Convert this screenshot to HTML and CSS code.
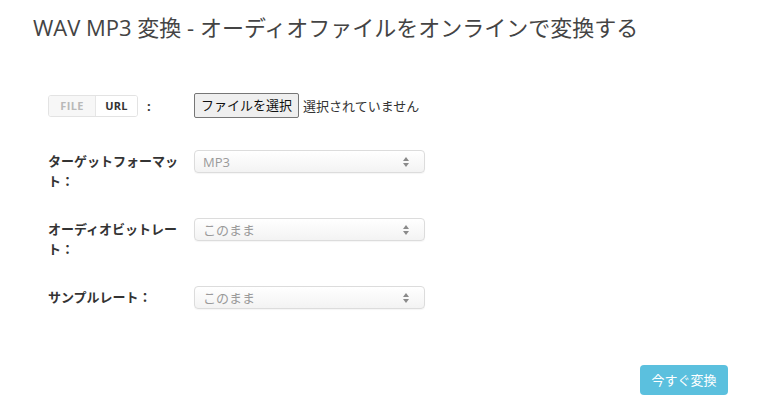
FILE: index.html
```html
<!DOCTYPE html>
<html lang="ja">
<head>
<meta charset="utf-8">
<title>WAV MP3 変換</title>
<link rel="stylesheet" href="styles.css">
</head>
<body>
<h1 class="title">WAV MP3 変換 - オーディオファイルをオンラインで変換する</h1>
<form class="form">
  <div class="row row-file">
    <div class="label label-toggle">
      <span class="toggle">
        <span class="seg seg-off">FILE</span><span class="seg seg-on">URL</span>
      </span>
      <span class="colon">:</span>
    </div>
    <div class="field file-field">
      <span class="file-btn">ファイルを選択</span>
      <span class="file-status">選択されていません</span>
    </div>
  </div>
  <div class="row">
    <div class="label">ターゲットフォーマット：</div>
    <div class="field">
      <div class="select">
        <span class="select-text">MP3</span>
        <svg class="arrows" width="6" height="10" viewBox="0 0 6 10"><path d="M3 0 L6 4 H0 Z M3 10 L6 6 H0 Z" fill="#8a8a8a"/></svg>
      </div>
    </div>
  </div>
  <div class="row">
    <div class="label">オーディオビットレート：</div>
    <div class="field">
      <div class="select">
        <span class="select-text">このまま</span>
        <svg class="arrows" width="6" height="10" viewBox="0 0 6 10"><path d="M3 0 L6 4 H0 Z M3 10 L6 6 H0 Z" fill="#8a8a8a"/></svg>
      </div>
    </div>
  </div>
  <div class="row">
    <div class="label">サンプルレート：</div>
    <div class="field">
      <div class="select">
        <span class="select-text">このまま</span>
        <svg class="arrows" width="6" height="10" viewBox="0 0 6 10"><path d="M3 0 L6 4 H0 Z M3 10 L6 6 H0 Z" fill="#8a8a8a"/></svg>
      </div>
    </div>
  </div>
  <div class="actions">
    <span class="convert-btn">今すぐ変換</span>
  </div>
</form>
</body>
</html>
```
FILE: styles.css
```css
html, body {
  margin: 0;
  padding: 0;
  background: #ffffff;
}
body {
  font-family: "Open Sans", "Noto Sans CJK JP", sans-serif;
  color: #333333;
  width: 768px;
  height: 416px;
  overflow: hidden;
}
.title {
  margin: 0;
  padding: 12px 0 0 33px;
  font-size: 22px;
  line-height: 30px;
  font-weight: 400;
  color: #444444;
  white-space: nowrap;
}
.form {
  margin: 51px 0 0 48px;
}
.row {
  display: flex;
  align-items: flex-start;
  margin-bottom: 27px;
}
.row-file {
  margin-bottom: 32px;
  align-items: center;
}
.label {
  width: 136px;
  margin-right: 10px;
  font-size: 13px;
  line-height: 20px;
  font-weight: 700;
  color: #333333;
  padding-top: 1px;
}
.label-toggle {
  display: flex;
  align-items: center;
  padding-top: 0;
}
.toggle {
  display: inline-flex;
  border: 1px solid #e3e3e3;
  border-radius: 3px;
  overflow: hidden;
  height: 20px;
}
.seg {
  font-family: "Open Sans", sans-serif;
  font-size: 11px;
  font-weight: 700;
  line-height: 20px;
  text-align: center;
  letter-spacing: 0.3px;
}
.seg-off {
  width: 46px;
  color: #b9b9b9;
  background: #f7f7f7;
  border-right: 1px solid #e6e6e6;
}
.seg-on {
  width: 41px;
  color: #333333;
  background: #ffffff;
}
.colon {
  margin-left: 9px;
  font-size: 13px;
  font-weight: 700;
}
.field {
  display: flex;
  align-items: center;
}
.file-btn {
  display: inline-block;
  height: 23px;
  line-height: 23px;
  padding: 0 6px;
  font-size: 13px;
  color: #111111;
  background: #efefef;
  border: 1px solid #767676;
  border-radius: 2px;
}
.file-status {
  margin-left: 4px;
  font-size: 13px;
  color: #333333;
}
.select {
  width: 206px;
  height: 21px;
  border: 1px solid #dcdcdc;
  border-radius: 4px;
  background: linear-gradient(#ffffff, #f3f3f3);
  box-shadow: 0 1px 1px rgba(0, 0, 0, 0.04);
  display: flex;
  align-items: center;
  justify-content: space-between;
  padding: 0 15px 0 8px;
}
.select-text {
  font-size: 13px;
  color: #9a9a9a;
}
.arrows {
  display: block;
}
.actions {
  display: flex;
  justify-content: flex-end;
  padding-right: 40px;
  margin-top: 56px;
  margin-left: -48px;
}
.convert-btn {
  display: inline-block;
  width: 88px;
  height: 30px;
  line-height: 30px;
  text-align: center;
  font-size: 13px;
  color: #ffffff;
  background: #5bc0de;
  border-radius: 4px;
}
```
